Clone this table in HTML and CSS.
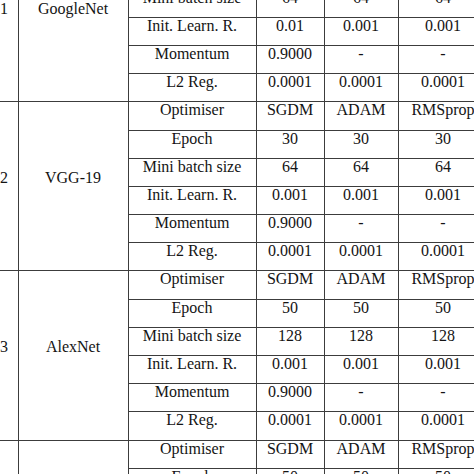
FILE: index.html
```html
<!DOCTYPE html>
<html>
<head>
<meta charset="utf-8">
<link rel="stylesheet" href="styles.css">
</head>
<body>
<div class="viewport">
<table class="params">
<colgroup>
<col class="c-num"><col class="c-model"><col class="c-param"><col class="c-sgdm"><col class="c-adam"><col class="c-rms">
</colgroup>
<tbody>
<tr><td rowspan="6" class="group">1</td><td rowspan="6" class="group">GoogleNet</td><td>Optimiser</td><td>SGDM</td><td>ADAM</td><td>RMSprop</td></tr>
<tr><td>Epoch</td><td>30</td><td>30</td><td>30</td></tr>
<tr><td>Mini batch size</td><td>64</td><td>64</td><td>64</td></tr>
<tr><td>Init. Learn. R.</td><td>0.01</td><td>0.001</td><td>0.001</td></tr>
<tr><td>Momentum</td><td>0.9000</td><td>-</td><td>-</td></tr>
<tr><td>L2 Reg.</td><td>0.0001</td><td>0.0001</td><td>0.0001</td></tr>

<tr><td rowspan="6" class="group">2</td><td rowspan="6" class="group">VGG-19</td><td>Optimiser</td><td>SGDM</td><td>ADAM</td><td>RMSprop</td></tr>
<tr><td>Epoch</td><td>30</td><td>30</td><td>30</td></tr>
<tr><td>Mini batch size</td><td>64</td><td>64</td><td>64</td></tr>
<tr><td>Init. Learn. R.</td><td>0.001</td><td>0.001</td><td>0.001</td></tr>
<tr><td>Momentum</td><td>0.9000</td><td>-</td><td>-</td></tr>
<tr><td>L2 Reg.</td><td>0.0001</td><td>0.0001</td><td>0.0001</td></tr>

<tr><td rowspan="6" class="group">3</td><td rowspan="6" class="group">AlexNet</td><td>Optimiser</td><td>SGDM</td><td>ADAM</td><td>RMSprop</td></tr>
<tr><td>Epoch</td><td>50</td><td>50</td><td>50</td></tr>
<tr><td>Mini batch size</td><td>128</td><td>128</td><td>128</td></tr>
<tr><td>Init. Learn. R.</td><td>0.001</td><td>0.001</td><td>0.001</td></tr>
<tr><td>Momentum</td><td>0.9000</td><td>-</td><td>-</td></tr>
<tr><td>L2 Reg.</td><td>0.0001</td><td>0.0001</td><td>0.0001</td></tr>

<tr><td rowspan="6" class="group">4</td><td rowspan="6" class="group">ResNet-50</td><td>Optimiser</td><td>SGDM</td><td>ADAM</td><td>RMSprop</td></tr>
<tr><td>Epoch</td><td>50</td><td>50</td><td>50</td></tr>
<tr><td>Mini batch size</td><td>64</td><td>64</td><td>64</td></tr>
<tr><td>Init. Learn. R.</td><td>0.001</td><td>0.001</td><td>0.001</td></tr>
<tr><td>Momentum</td><td>0.9000</td><td>-</td><td>-</td></tr>
<tr><td>L2 Reg.</td><td>0.0001</td><td>0.0001</td><td>0.0001</td></tr>
</tbody>
</table>
</div>
</body>
</html>
```
FILE: styles.css
```css
html, body {
  margin: 0;
  padding: 0;
  background: #ffffff;
}
.viewport {
  width: 474px;
  height: 474px;
  overflow: hidden;
}
.params {
  border-collapse: collapse;
  table-layout: fixed;
  width: 498px;
  margin-top: -67.8px;
  margin-left: -10.5px;
  font-family: "Liberation Serif", "Times New Roman", serif;
  font-size: 16px;
  color: #141414;
}
.c-num { width: 28px; }
.c-model { width: 110px; }
.c-param { width: 128px; }
.c-sgdm { width: 68px; }
.c-adam { width: 74px; }
.c-rms { width: 90px; }
.params td {
  border: 1px solid #3c3c3c;
  padding: 0 0 11.2px 0;
  line-height: 16px;
  text-align: center;
  vertical-align: top;
  white-space: nowrap;
  overflow: hidden;
}
.params td.group {
  vertical-align: middle;
  padding-bottom: 17.2px;
}
```
